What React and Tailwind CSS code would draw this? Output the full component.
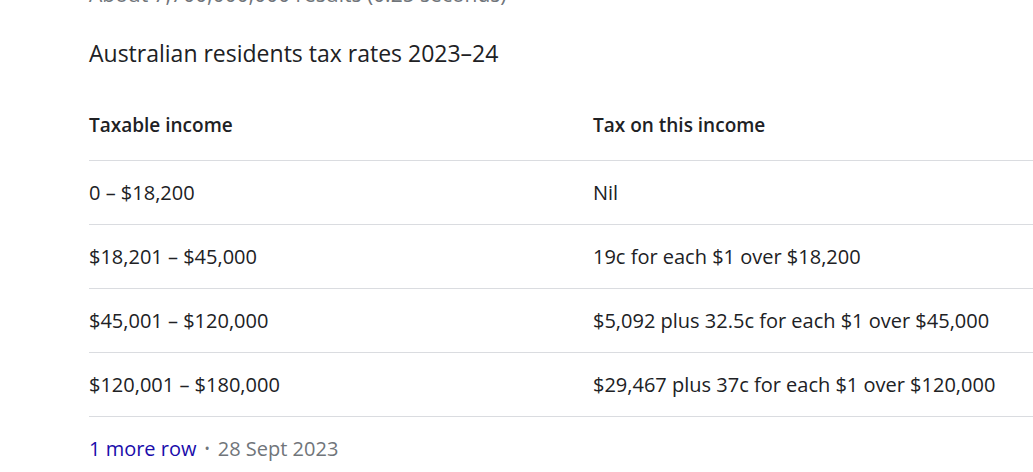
import React from 'react';

const rows = [
  ['0 – $18,200', 'Nil'],
  ['$18,201 – $45,000', '19c for each $1 over $18,200'],
  ['$45,001 – $120,000', '$5,092 plus 32.5c for each $1 over $45,000'],
  ['$120,001 – $180,000', '$29,467 plus 37c for each $1 over $120,000'],
];

export default function App() {
  return (
    <div
      className="h-[472px] w-[1033px] overflow-hidden bg-white pl-[89px] text-[#202124]"
      style={{ fontFamily: '"Open Sans", Roboto, Arial, sans-serif' }}
    >
      {/* results count, mostly scrolled off */}
      <div className="-mt-[20px] whitespace-nowrap text-[21px] leading-[28px] text-[#70757a]">
        About 7,700,000,000 results (0.25 seconds)
      </div>

      <h2 className="mt-[31px] text-[23px] leading-[28px]">Australian residents tax rates 2023–24</h2>

      <div className="mt-[44px] w-[1100px]">
        <div className="grid grid-cols-[504px_1fr] border-b border-[#dadce0] pb-[21px] text-[19px] font-semibold leading-[28px]">
          <div>Taxable income</div>
          <div>Tax on this income</div>
        </div>
        {rows.map(([income, tax]) => (
          <div
            key={income}
            className="grid h-[64px] grid-cols-[504px_1fr] items-center border-b border-[#dadce0] text-[20px] leading-[28px]"
          >
            <div>{income}</div>
            <div>{tax}</div>
          </div>
        ))}
      </div>

      <div className="flex h-[64px] items-center gap-[8px] text-[20px] leading-[28px]">
        <a href="#" className="text-[#1a0dab]">1 more row</a>
        <span className="text-[14px] text-[#70757a]">•</span>
        <span className="text-[#70757a]">28 Sept 2023</span>
      </div>
    </div>
  );
}
